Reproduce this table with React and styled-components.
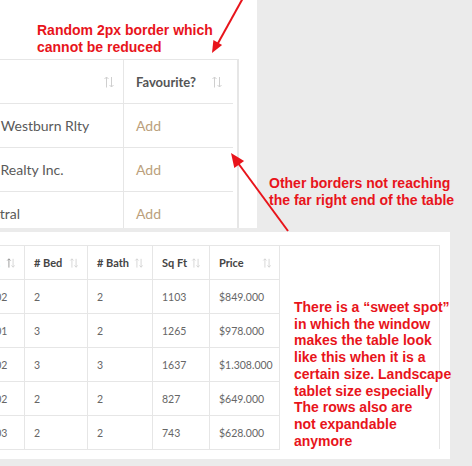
import styled, { createGlobalStyle } from "styled-components"

const GlobalStyle = createGlobalStyle`
  html, body {
    margin: 0;
    padding: 0;
  }
  body {
    background: #ebebeb;
    overflow: hidden;
  }
`

const Page = styled.div`
  position: relative;
  width: 472px;
  height: 466px;
  overflow: hidden;
  display: flex;
  flex-direction: column;
  gap: 4px;
  font-family: Lato, "Open Sans", sans-serif;
`

const TopRow = styled.div`
  display: flex;
  height: 228px;
  flex-shrink: 0;
`

const TopPanel = styled.div`
  width: 257px;
  background: #fff;
  overflow: hidden;
  display: flex;
  flex-direction: column;
`

const Note = styled.p`
  margin: 0;
  padding: ${p => p.$pad || "0"};
  font-family: "Liberation Sans", Arial, sans-serif;
  font-weight: bold;
  font-size: 14px;
  line-height: ${p => p.$lh || "17px"};
  color: #e8141b;
  white-space: nowrap;
`

const TopFrame = styled.div`
  margin-top: 3px;
  width: 239px;
  flex: 1;
  box-sizing: border-box;
  border-top: 1px solid #e6e6e6;
  border-right: 2px solid #e6e6e6;
  overflow: hidden;
`

const TopTable = styled.div`
  margin-left: -118px;
  width: 351px;
`

const TopRowLine = styled.div`
  display: flex;
  height: 44px;
  box-sizing: border-box;
  border-bottom: 1px solid #e6e6e6;
`

const TopCell = styled.div`
  width: ${p => p.$w}px;
  box-sizing: border-box;
  display: flex;
  align-items: center;
  justify-content: space-between;
  padding: 0 ${p => p.$pr || 8}px 0 ${p => p.$pl || 12}px;
  border-left: ${p => (p.$divider ? "1px solid #e6e6e6" : "none")};
  font-size: ${p => (p.$head ? 13 : 14)}px;
  font-weight: ${p => (p.$head ? 700 : 400)};
  color: ${p => (p.$link ? "#bb9f7c" : p.$head ? "#555" : "#5a5a5a")};
  white-space: nowrap;
`

const SideNote = styled(Note)`
  padding: 175px 0 0 12px;
`

const BottomPanel = styled.div`
  width: 450px;
  height: 227px;
  flex-shrink: 0;
  box-sizing: border-box;
  background: #fff;
  padding: 13px 10px 0 0;
`

const BottomFrame = styled.div`
  display: flex;
  width: 440px;
  height: 204px;
  box-sizing: border-box;
  border-top: 1px solid #e6e6e6;
  border-right: 1px solid #e6e6e6;
`

const BottomTable = styled.div`
  margin-left: -26px;
  width: 306px;
  flex-shrink: 0;
`

const BottomRowLine = styled.div`
  display: flex;
  height: 34px;
  box-sizing: border-box;
  border-bottom: 1px solid #e6e6e6;
`

const BottomCell = styled.div`
  width: ${p => p.$w}px;
  box-sizing: border-box;
  display: flex;
  align-items: center;
  justify-content: space-between;
  padding: 0 ${p => p.$pr || 8}px 0 9px;
  border-right: 1px solid #e6e6e6;
  font-size: ${p => (p.$head ? 11 : 10.5)}px;
  font-weight: ${p => (p.$head ? 700 : 400)};
  color: ${p => (p.$head ? "#444" : "#666")};
  white-space: nowrap;
`

const NoteCell = styled(Note)`
  padding: 53px 0 0 14px;
`

const Overlay = styled.svg`
  position: absolute;
  left: 0;
  top: 0;
  pointer-events: none;
`

const SortIcon = ({ size = 12, active }) => (
  <svg width={size} height={size} viewBox="0 0 12 12" fill="none" strokeWidth="1">
    <g stroke={active ? "#8a8a8a" : "#cfcfcf"}>
      <path d="M3.5 11.5V1M1.5 3L3.5 1L5.5 3" />
    </g>
    <g stroke="#cfcfcf">
      <path d="M8.5 1V11M6.5 9L8.5 11L10.5 9" />
    </g>
  </svg>
)

const agents = [
  "Coldwell Banker Westburn Rlty",
  "Macdonald Park Realty Inc.",
  "RE/MAX All Central",
]

const listings = [
  { unit: "1102", bed: 2, bath: 2, sqft: 1103, price: "$849.000" },
  { unit: "1901", bed: 3, bath: 2, sqft: 1265, price: "$978.000" },
  { unit: "1602", bed: 3, bath: 3, sqft: 1637, price: "$1.308.000" },
  { unit: "1802", bed: 2, bath: 2, sqft: 827, price: "$649.000" },
  { unit: "1403", bed: 2, bath: 2, sqft: 743, price: "$628.000" },
]

const cols = [
  { key: "unit", label: "No.", w: 51 },
  { key: "bed", label: "# Bed", w: 63 },
  { key: "bath", label: "# Bath", w: 65 },
  { key: "sqft", label: "Sq Ft", w: 57 },
  { key: "price", label: "Price", w: 70, pr: 7 },
]

export default function App() {
  return (
    <>
      <GlobalStyle />
      <Page>
        <TopRow>
          <TopPanel>
            <Note $pad="22px 0 0 37px">
              Random 2px border which
              <br />
              cannot be reduced
            </Note>
            <TopFrame>
              <TopTable>
                <TopRowLine>
                  <TopCell $w={241} $head>
                    Agent
                    <SortIcon />
                  </TopCell>
                  <TopCell $w={110} $head $divider $pl={12} $pr={10}>
                    Favourite?
                    <SortIcon />
                  </TopCell>
                </TopRowLine>
                {agents.map(name => (
                  <TopRowLine key={name}>
                    <TopCell $w={241} $pl={16}>{name}</TopCell>
                    <TopCell $w={110} $divider $link $pl={12}>
                      Add
                    </TopCell>
                  </TopRowLine>
                ))}
              </TopTable>
            </TopFrame>
          </TopPanel>
          <SideNote>
            Other borders not reaching
            <br />
            the far right end of the table
          </SideNote>
        </TopRow>

        <BottomPanel>
          <BottomFrame>
            <BottomTable>
              <BottomRowLine>
                {cols.map((c, i) => (
                  <BottomCell key={c.key} $w={c.w} $pr={c.pr} $head>
                    {c.label}
                    <SortIcon size={10} active={i === 0} />
                  </BottomCell>
                ))}
              </BottomRowLine>
              {listings.map(row => (
                <BottomRowLine key={row.unit}>
                  {cols.map(c => (
                    <BottomCell key={c.key} $w={c.w} $pr={c.pr}>
                      {row[c.key]}
                    </BottomCell>
                  ))}
                </BottomRowLine>
              ))}
            </BottomTable>
            <NoteCell $lh="16.7px">
              There is a “sweet spot”
              <br />
              in which the window
              <br />
              makes the table look
              <br />
              like this when it is a
              <br />
              certain size. Landscape
              <br />
              tablet size especially
              <br />
              The rows also are
              <br />
              not expandable
              <br />
              anymore
            </NoteCell>
          </BottomFrame>
        </BottomPanel>

        <Overlay width="472" height="466" viewBox="0 0 472 466">
          <g stroke="#e8141b" strokeWidth="2" fill="#e8141b">
            <line x1="243" y1="-2" x2="217" y2="45" />
            <polygon points="212,53 222.1,44.9 213.4,40.1" stroke="none" />
            <line x1="288" y1="231" x2="238" y2="163" />
            <polygon points="231,153 244.1,160.9 234.3,167.9" stroke="none" />
          </g>
        </Overlay>
      </Page>
    </>
  )
}
